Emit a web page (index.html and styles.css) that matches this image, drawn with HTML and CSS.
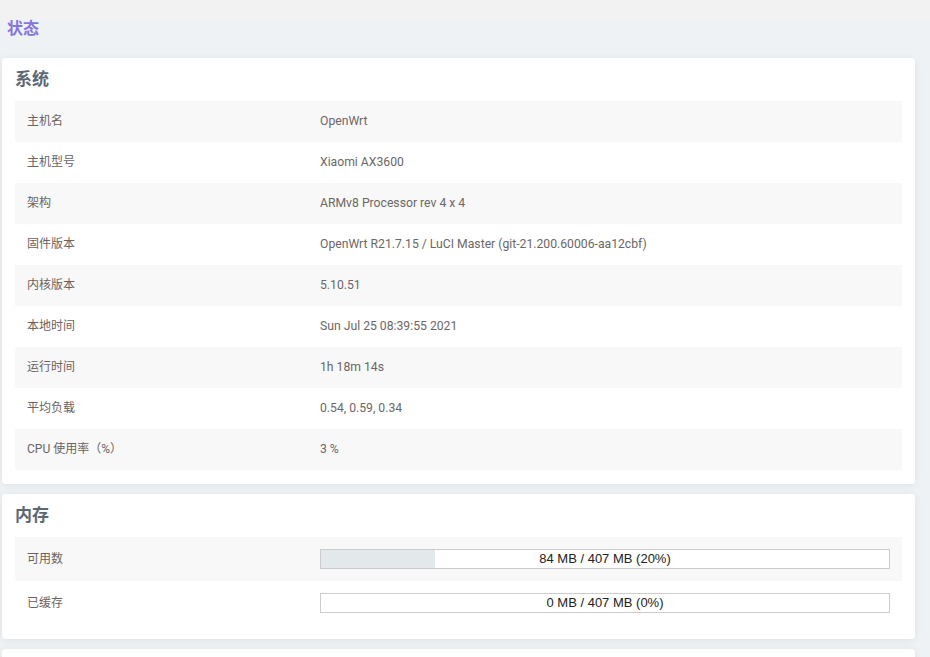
FILE: index.html
```html
<!DOCTYPE html>
<html lang="zh-CN">
<head>
<meta charset="utf-8">
<title>状态</title>
<link rel="stylesheet" href="styles.css">
</head>
<body>
<div class="topband"></div>
<main class="page">
  <h2 class="page-title">状态</h2>

  <section class="card">
    <h3 class="card-title">系统</h3>
    <div class="table">
      <div class="row"><div class="label">主机名</div><div class="value">OpenWrt</div></div>
      <div class="row"><div class="label">主机型号</div><div class="value">Xiaomi AX3600</div></div>
      <div class="row"><div class="label">架构</div><div class="value">ARMv8 Processor rev 4 x 4</div></div>
      <div class="row"><div class="label">固件版本</div><div class="value">OpenWrt R21.7.15 / LuCI Master (git-21.200.60006-aa12cbf)</div></div>
      <div class="row"><div class="label">内核版本</div><div class="value">5.10.51</div></div>
      <div class="row"><div class="label">本地时间</div><div class="value">Sun Jul 25 08:39:55 2021</div></div>
      <div class="row"><div class="label">运行时间</div><div class="value">1h 18m 14s</div></div>
      <div class="row"><div class="label">平均负载</div><div class="value">0.54, 0.59, 0.34</div></div>
      <div class="row"><div class="label">CPU 使用率（%）</div><div class="value">3 %</div></div>
    </div>
  </section>

  <section class="card">
    <h3 class="card-title">内存</h3>
    <div class="table">
      <div class="row row-bar">
        <div class="label">可用数</div>
        <div class="value">
          <div class="bar"><div class="bar-fill" style="width:20%"></div><span class="bar-text">84 MB / 407 MB (20%)</span></div>
        </div>
      </div>
      <div class="row row-bar">
        <div class="label">已缓存</div>
        <div class="value">
          <div class="bar"><div class="bar-fill" style="width:0%"></div><span class="bar-text">0 MB / 407 MB (0%)</span></div>
        </div>
      </div>
    </div>
  </section>

  <section class="card card-next"></section>
</main>
</body>
</html>
```

FILE: styles.css
```css
* { box-sizing: border-box; }
html, body { margin: 0; padding: 0; }
body {
  background: #eff2f4;
  font-family: Roboto, "Noto Sans CJK SC", "Noto Sans", sans-serif;
  color: #666;
  overflow: hidden;
}
.topband {
  height: 20px;
  background: #f2f2f2;
}
.page {
  padding: 0 15px 0 2px;
}
.page-title {
  margin: 0;
  padding: 0 0 0 5px;
  height: 38px;
  line-height: 18px;
  font-size: 16px;
  font-weight: bold;
  color: #8574de;
}
.card {
  background: #fff;
  border-radius: 4px;
  box-shadow: 0 1px 8px rgba(0, 0, 0, 0.07);
  padding: 0 13px 14px 13px;
  margin-bottom: 10px;
}
.card-title {
  margin: 0;
  height: 43px;
  padding-top: 10px;
  line-height: 22px;
  font-size: 17px;
  font-weight: bold;
  color: #5d6876;
}
.table {
  display: flex;
  flex-direction: column;
}
.row {
  display: grid;
  grid-template-columns: 305px 1fr;
  align-items: center;
  height: 41px;
  font-size: 12px;
  line-height: 17px;
}
.row:nth-child(odd) { background: #f8f8f8; }
.label { padding-left: 12px; color: #6b6360; }
.value { color: #6b6766; padding-right: 12px; font-size: 12.2px; }
.row-bar { height: 44px; }
.bar {
  position: relative;
  height: 20px;
  border: 1px solid #ccc;
  background: #fff;
}
.bar-fill {
  height: 100%;
  background: #e3e8eb;
}
.bar-text {
  position: absolute;
  left: 0;
  right: 0;
  top: 0;
  line-height: 18px;
  text-align: center;
  font-family: "Liberation Sans", Arial, sans-serif;
  font-size: 13px;
  color: #222;
}
.card-next { height: 40px; }
```
